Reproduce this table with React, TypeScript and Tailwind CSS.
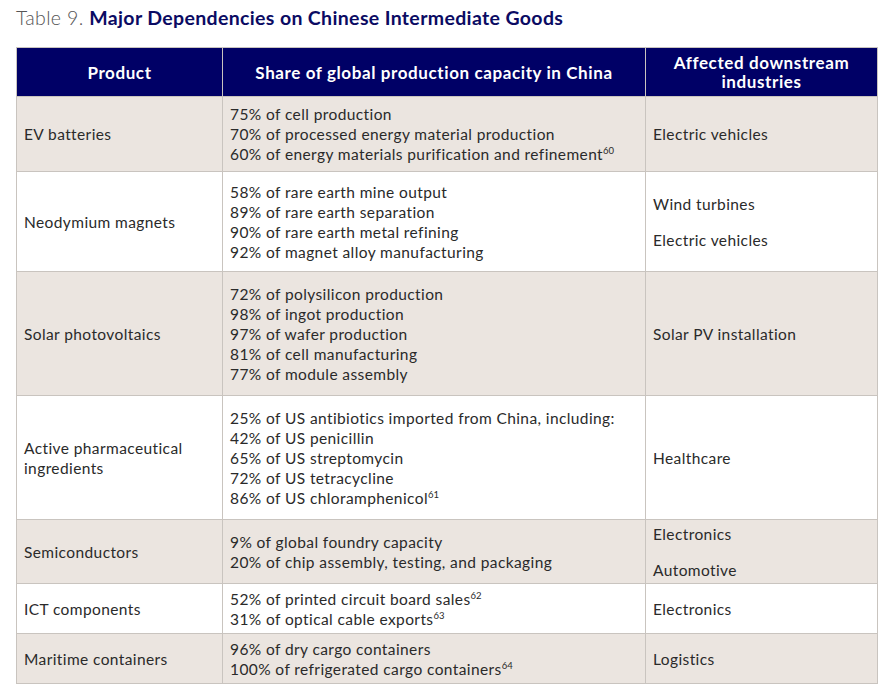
import React from "react";

type Row = {
  product: string;
  lines: React.ReactNode[];
  affected: string[];
  h: string;
  shade: boolean;
};

const Sup = ({ n }: { n: string }) => (
  <span className="text-[9.5px] leading-[0] relative -top-[6px] tracking-normal">{n}</span>
);

const rows: Row[] = [
  {
    product: "EV batteries",
    lines: [
      "75% of cell production",
      "70% of processed energy material production",
      <>60% of energy materials purification and refinement<Sup n="60" /></>,
    ],
    affected: ["Electric vehicles"],
    h: "h-[75px]",
    shade: true,
  },
  {
    product: "Neodymium magnets",
    lines: [
      "58% of rare earth mine output",
      "89% of rare earth separation",
      "90% of rare earth metal refining",
      "92% of magnet alloy manufacturing",
    ],
    affected: ["Wind turbines", "Electric vehicles"],
    h: "h-[100px]",
    shade: false,
  },
  {
    product: "Solar photovoltaics",
    lines: [
      "72% of polysilicon production",
      "98% of ingot production",
      "97% of wafer production",
      "81% of cell manufacturing",
      "77% of module assembly",
    ],
    affected: ["Solar PV installation"],
    h: "h-[124px]",
    shade: true,
  },
  {
    product: "Active pharmaceutical ingredients",
    lines: [
      "25% of US antibiotics imported from China, including:",
      "42% of US penicillin",
      "65% of US streptomycin",
      "72% of US tetracycline",
      <>86% of US chloramphenicol<Sup n="61" /></>,
    ],
    affected: ["Healthcare"],
    h: "h-[124px]",
    shade: false,
  },
  {
    product: "Semiconductors",
    lines: ["9% of global foundry capacity", "20% of chip assembly, testing, and packaging"],
    affected: ["Electronics", "Automotive"],
    h: "h-[64px]",
    shade: true,
  },
  {
    product: "ICT components",
    lines: [
      <>52% of printed circuit board sales<Sup n="62" /></>,
      <>31% of optical cable exports<Sup n="63" /></>,
    ],
    affected: ["Electronics"],
    h: "h-[50px]",
    shade: false,
  },
  {
    product: "Maritime containers",
    lines: [
      "96% of dry cargo containers",
      <>100% of refrigerated cargo containers<Sup n="64" /></>,
    ],
    affected: ["Logistics"],
    h: "h-[50px]",
    shade: true,
  },
];

export default function App() {
  return (
    <div
      className="w-[896px] h-[700px] bg-white text-[#2a2a2a]"
      style={{ fontFamily: "Lato, 'Open Sans', sans-serif" }}
    >
      <div className="pl-[16px] pt-[6px] text-[19.5px] leading-[24px] tracking-[0.35px]">
        <span className="font-light text-[#555]">Table 9. </span>
        <span className="font-bold text-[#0b0b63]">Major Dependencies on Chinese Intermediate Goods</span>
      </div>
      <table className="ml-[16px] mt-[17px] w-[861px] border-collapse table-fixed text-[15.5px] leading-[20px] tracking-[0.4px]">
        <colgroup>
          <col className="w-[206px]" />
          <col className="w-[423px]" />
          <col className="w-[232px]" />
        </colgroup>
        <thead>
          <tr className="h-[49px] bg-[#000066] text-white font-bold text-[17px] leading-[19px] tracking-[0.6px]">
            <th className="border border-[#c9c4bf] px-2 text-center">Product</th>
            <th className="border border-[#c9c4bf] px-1 text-center">Share of global production capacity in China</th>
            <th className="border border-[#c9c4bf] px-2 text-center">
              Affected downstream
              <br />
              industries
            </th>
          </tr>
        </thead>
        <tbody>
          {rows.map((r, i) => (
            <tr key={i} className={`${r.h} ${r.shade ? "bg-[#ebe5e0]" : "bg-white"}`}>
              <td className="border border-[#c9c4bf] pl-[7px] pr-2 align-middle">{r.product}</td>
              <td className="border border-[#c9c4bf] pl-[7px] pr-2 align-middle">
                {r.lines.map((l, j) => (
                  <div key={j}>{l}</div>
                ))}
              </td>
              <td className="border border-[#c9c4bf] pl-[7px] pr-2 align-middle">
                <div className="flex flex-col gap-[16px]">
                  {r.affected.map((a, j) => (
                    <div key={j}>{a}</div>
                  ))}
                </div>
              </td>
            </tr>
          ))}
        </tbody>
      </table>
    </div>
  );
}
